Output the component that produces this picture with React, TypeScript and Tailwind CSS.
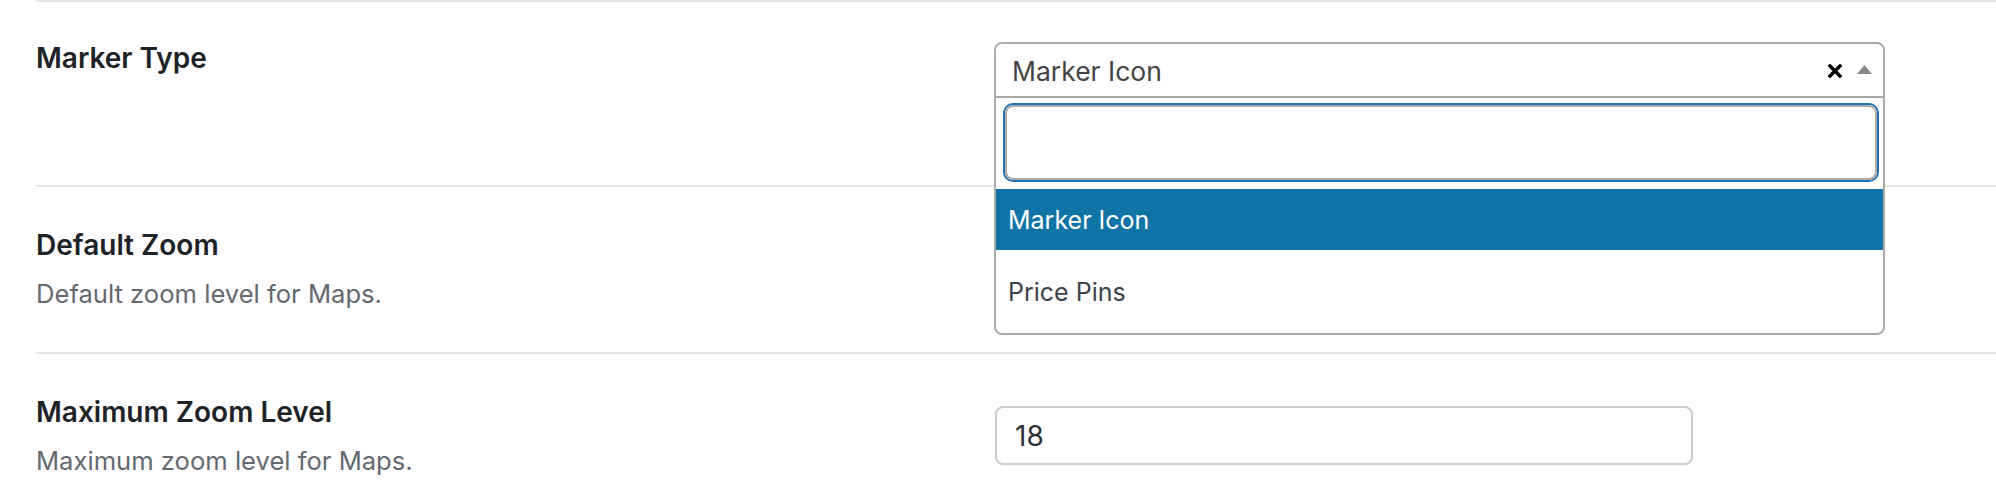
import React from 'react';

const labelCls = "text-[28px] leading-[36px] font-semibold text-[#1d2327]";
const descCls = "mt-[14px] text-[25.6px] leading-[34px] text-[#646970]";

export default function App() {
  return (
    <div className="w-[1996px] h-[496px] overflow-hidden bg-white pl-[36px]" style={{ fontFamily: 'Inter, "Noto Sans", sans-serif' }}>
      {/* Marker Type */}
      <div className="grid grid-cols-[956px_1fr] items-start border-t-2 border-[#e5e5e5] h-[185px] pt-[38px]">
        <div className={labelCls}>Marker Type</div>
        <div className="relative self-start mt-[2px] ml-[2px] w-[891px] z-10">
          <div className="h-[56px] border-2 border-[#aaaaaa] rounded-t-[8px] flex items-center pl-[16px] pr-[11px] bg-white">
            <span className="flex-1 text-[26.5px] leading-[34px] text-[#444444] pt-[2px]">Marker Icon</span>
            <svg width="14" height="14" viewBox="0 0 14 14" className="mt-[1px]">
              <path d="M2 2 L12 12 M12 2 L2 12" stroke="#000" strokeWidth="3.4" strokeLinecap="square" />
            </svg>
            <svg width="15" height="9" viewBox="0 0 15 9" className="ml-[15px] -mt-[2px]">
              <path d="M0 9 L7.5 0 L15 9 Z" fill="#888888" />
            </svg>
          </div>
          <div className="absolute top-full left-0 w-full bg-white border-x-2 border-b-2 border-[#aaaaaa] rounded-b-[8px] h-[237px]">
            <div className="pl-[9px] pr-[6px] pt-[7px]">
              <div className="h-[75px] border-2 border-[#aaaaaa] rounded-[8px] shadow-[0_0_0_2px_#2271b1]" />
            </div>
            <div className="mt-[9px] h-[61px] bg-[#1174a6] text-white text-[25px] leading-[34px] pl-[12px] pt-[14px]">Marker Icon</div>
            <div className="text-[25px] leading-[34px] text-[#3c434a] pl-[12px] pt-[25px]">Price Pins</div>
          </div>
        </div>
      </div>

      {/* Default Zoom */}
      <div className="grid grid-cols-[956px_1fr] border-t-2 border-[#e5e5e5] h-[167px] pt-[40px]">
        <div>
          <div className={labelCls}>Default Zoom</div>
          <div className={descCls}>Default zoom level for Maps.</div>
        </div>
        <div />
      </div>

      {/* Maximum Zoom Level */}
      <div className="grid grid-cols-[956px_1fr] items-start border-t-2 border-[#e5e5e5] h-[144px] pt-[40px]">
        <div>
          <div className={labelCls}>Maximum Zoom Level</div>
          <div className={descCls}>Maximum zoom level for Maps.</div>
        </div>
        <div className="mt-[12px] ml-[3px] w-[698px] h-[59px] border-2 border-[#c9ccd0] rounded-[8px] flex items-center pl-[18px] text-[28px] text-[#2c3338]">18</div>
      </div>
    </div>
  );
}
